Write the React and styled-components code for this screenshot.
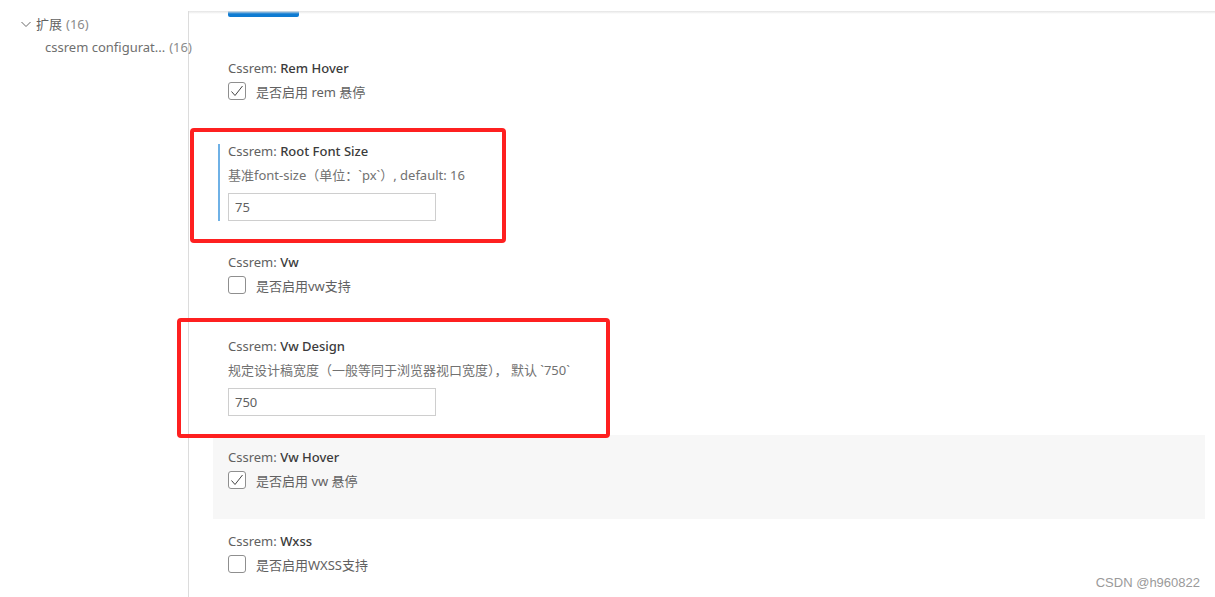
import React from "react";
import styled, { createGlobalStyle } from "styled-components";

const Global = createGlobalStyle`
  html, body { margin: 0; padding: 0; background: #fff; }
  body { font-family: "Segoe UI", "Noto Sans", "Noto Sans CJK SC", sans-serif; font-size: 13px; color: #616161; }
  * { box-sizing: border-box; }
`;

const Root = styled.div`
  position: relative;
  width: 1215px;
  height: 597px;
  display: flex;
  flex-direction: column;
  overflow: hidden;
  background: #fff;
`;

const TopStrip = styled.div`
  height: 11px;
  flex: none;
`;

const Body = styled.div`
  flex: 1;
  display: flex;
  min-height: 0;
`;

const Sidebar = styled.nav`
  width: 189px;
  flex: none;
  border-right: 1px solid #dcdcdc;
  padding-top: 1px;
`;

const TreeRow = styled.div`
  height: 23px;
  display: flex;
  align-items: center;
  padding-left: ${(p) => p.$indent}px;
  white-space: nowrap;
  color: ${(p) => (p.$muted ? "#6f6f6f" : "#616161")};
`;

const Count = styled.span`
  color: #8b8b8b;
  margin-left: 4px;
`;

const Chevron = styled.svg`
  width: 12px;
  height: 12px;
  margin-right: 4px;
  flex: none;
`;

const Main = styled.main`
  position: relative;
  flex: 1;
  overflow: hidden;
  padding: 0 10px 0 24px;
  &::before {
    content: "";
    position: absolute;
    left: 0;
    right: 0;
    top: 0;
    height: 3px;
    background: linear-gradient(#e4e4e4, rgba(255, 255, 255, 0));
    z-index: 2;
  }
`;

const EditButton = styled.button`
  display: block;
  margin: -20px 0 29px 15px;
  width: 71px;
  height: 26px;
  border: none;
  border-radius: 2px;
  background: #0e7bd2;
  color: #fff;
  font: inherit;
  font-size: 12px;
  line-height: 26px;
  padding: 0;
  overflow: hidden;
`;

const Item = styled.section`
  position: relative;
  padding: 13px 15px ${(p) => (p.$input ? 19 : p.$tight ? 29 : 30)}px;
  background: ${(p) => (p.$hover ? "#f7f7f7" : "transparent")};
  ${(p) =>
    p.$focused &&
    `&::before {
      content: "";
      position: absolute;
      left: 5px;
      top: 15px;
      bottom: 19px;
      width: 2px;
      background: #6fb1e6;
    }`}
`;

const Title = styled.div`
  line-height: 18px;
  height: 18px;
  color: #616161;
  white-space: nowrap;
`;

const Strong = styled.span`
  font-weight: 500;
  color: #3b3b3b;
`;

const Description = styled.div`
  margin-top: 6px;
  line-height: 18px;
  color: #717171;
  white-space: nowrap;
`;

const CheckRow = styled.label`
  margin-top: 5px;
  display: flex;
  align-items: center;
  height: 18px;
  gap: 10px;
  color: #616161;
`;

const Box = styled.span`
  width: 18px;
  height: 18px;
  border: 1px solid #8f8f8f;
  border-radius: 3px;
  background: #fff;
  display: flex;
  align-items: center;
  justify-content: center;
  flex: none;
`;

const Input = styled.input`
  display: block;
  margin-top: 9px;
  width: 208px;
  height: 28px;
  border: 1px solid #cecece;
  padding: 0 6px;
  font: inherit;
  color: #616161;
  background: #fff;
  outline: none;
`;

const Annotation = styled.div`
  position: absolute;
  border: 4px solid #fe2020;
  border-radius: 4px;
  pointer-events: none;
  z-index: 5;
`;

const Watermark = styled.div`
  position: absolute;
  right: 15px;
  bottom: 7px;
  font-family: "Liberation Sans", Arial, sans-serif;
  font-size: 13px;
  color: #9a9a9a;
`;

const Check = () => (
  <svg width="16" height="16" viewBox="0 0 16 16" fill="none">
    <path d="M2.5 8.5 L6 12.5 L13.5 3" stroke="#444" strokeWidth="1" />
  </svg>
);

const CheckItem = ({ name, label, checked, hover, tight }) => (
  <Item $hover={hover} $tight={tight}>
    <Title>
      Cssrem: <Strong>{name}</Strong>
    </Title>
    <CheckRow>
      <Box>{checked && <Check />}</Box>
      <span>{label}</span>
    </CheckRow>
  </Item>
);

const InputItem = ({ name, desc, value, focused }) => (
  <Item $input $focused={focused}>
    <Title>
      Cssrem: <Strong>{name}</Strong>
    </Title>
    <Description>{desc}</Description>
    <Input defaultValue={value} />
  </Item>
);

export default function App() {
  return (
    <Root>
      <Global />
      <TopStrip />
      <Body>
        <Sidebar>
          <TreeRow $indent={20}>
            <Chevron viewBox="0 0 12 12" fill="none">
              <path d="M1.5 4 L6 8.5 L10.5 4" stroke="#6a6a6a" strokeWidth="1" />
            </Chevron>
            扩展<Count>(16)</Count>
          </TreeRow>
          <TreeRow $indent={45} $muted>
            cssrem configurat...<Count>(16)</Count>
          </TreeRow>
        </Sidebar>
        <Main>
          <EditButton>在 settings.json 中编辑</EditButton>
          <CheckItem name="Rem Hover" label="是否启用 rem 悬停" checked tight />
          <InputItem
            name="Root Font Size"
            desc="基准font-size（单位：`px`）, default: 16"
            value="75"
            focused
          />
          <CheckItem name="Vw" label="是否启用vw支持" />
          <InputItem
            name="Vw Design"
            desc="规定设计稿宽度（一般等同于浏览器视口宽度）， 默认 `750`"
            value="750"
          />
          <CheckItem name="Vw Hover" label="是否启用 vw 悬停" checked hover />
          <CheckItem name="Wxss" label="是否启用WXSS支持" />
        </Main>
      </Body>
      <Annotation style={{ left: 190, top: 128, width: 316, height: 115 }} />
      <Annotation style={{ left: 177, top: 318, width: 433, height: 120 }} />
      <Watermark>CSDN @h960822</Watermark>
    </Root>
  );
}
